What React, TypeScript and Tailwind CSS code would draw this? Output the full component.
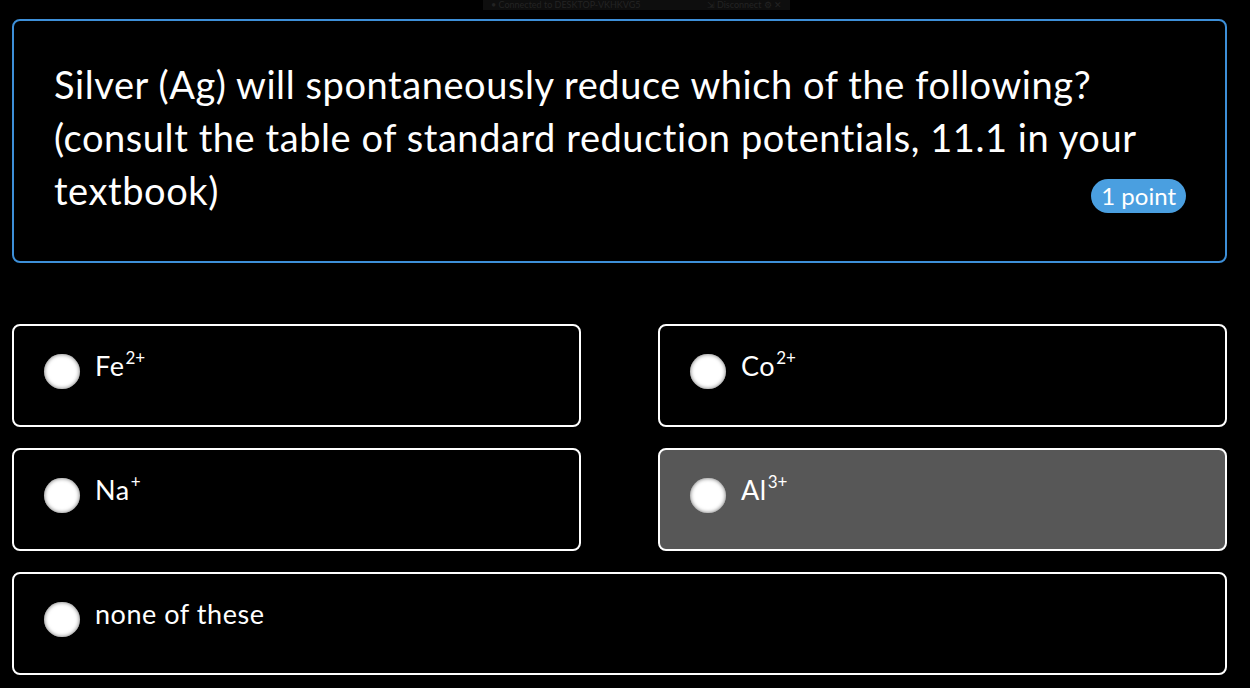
import type { ReactNode } from "react";

const font = { fontFamily: '"Lato", "Open Sans", sans-serif' };

interface OptionProps {
  label: ReactNode;
  hover?: boolean;
  wide?: boolean;
}

const Option = ({ label, hover, wide }: OptionProps) => (
  <div
    className={`flex h-[103px] items-start rounded-lg border-2 border-white px-[30px] pt-[28px] ${
      hover ? "bg-[#575757]" : "bg-black"
    } ${wide ? "col-span-2" : ""}`}
  >
    <span className="h-[35px] w-[36px] shrink-0 rounded-full bg-white shadow-[inset_0_0_4px_rgba(0,0,0,0.6)]" />
    <span className="ml-[15px] mt-[-6px] text-[27px] leading-[36px] tracking-[0.02em] text-white">{label}</span>
  </div>
);

const Sup = ({ children }: { children: ReactNode }) => (
  <sup className="top-[-12px] ml-[1px] text-[17px] tracking-normal">{children}</sup>
);

export default function App() {
  return (
    <div className="relative h-[688px] w-[1250px] overflow-hidden bg-black text-white" style={font}>
      <div className="absolute left-[483px] top-0 flex h-[10px] w-[307px] items-end justify-between bg-[#0e0e0e] px-2 text-[9px] leading-[10px] text-[#232323]">
        <span>• Connected to DESKTOP-VKHKVG5</span>
        <span>⇲ Disconnect ⚙ ✕</span>
      </div>

      <div className="pl-3 pr-[23px] pt-[19px]">
        <section className="rounded-lg border-2 border-[#3d8fd8] pb-[44px] pl-[40px] pr-[39px] pt-[37px]">
          <p className="text-[38px] leading-[53px] tracking-[0.015em] text-white">
            Silver (Ag) will spontaneously reduce which of the following?
            <br />
            (consult the table of standard reduction potentials, 11.1 in your
          </p>
          <div className="flex items-center justify-between">
            <p className="text-[38px] leading-[53px] tracking-[0.015em] text-white">textbook)</p>
            <span className="mt-[10px] rounded-full bg-[#4a9fe0] px-[10px] text-[24px] leading-[34px] text-white">
              1 point
            </span>
          </div>
        </section>

        <div className="mt-[61px] grid grid-cols-2 gap-x-[77px] gap-y-[21px]">
          <Option label={<>Fe<Sup>2+</Sup></>} />
          <Option label={<>Co<Sup>2+</Sup></>} />
          <Option label={<>Na<Sup>+</Sup></>} />
          <Option label={<>Al<Sup>3+</Sup></>} hover />
          <Option label="none of these" wide />
        </div>
      </div>
    </div>
  );
}
